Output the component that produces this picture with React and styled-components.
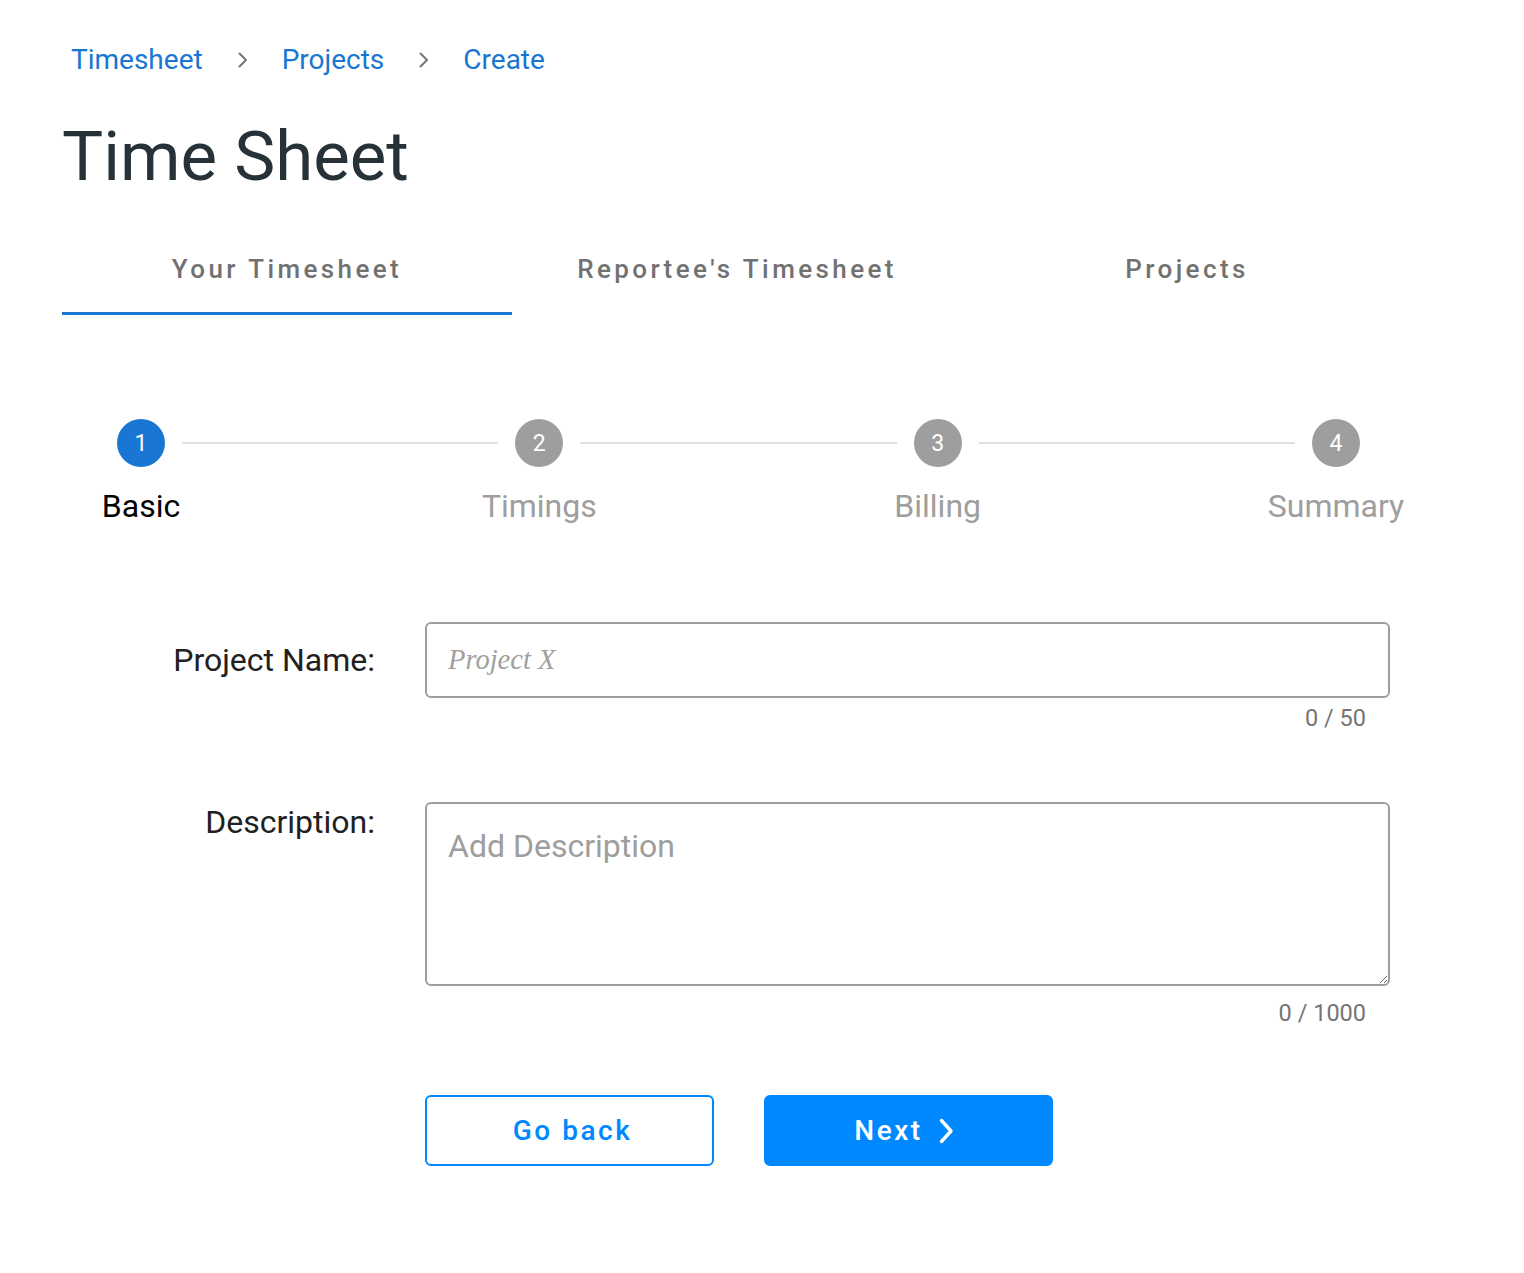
import React from 'react';
import styled, { createGlobalStyle } from 'styled-components';

const GlobalStyle = createGlobalStyle`
	body {
		margin: 0;
		background: #ffffff;
		font-family: Roboto, 'Liberation Sans', sans-serif;
	}
	* {
		box-sizing: border-box;
	}
`;

const Page = styled.div`
	width: 1350px;
	margin-left: 62px;
	padding-top: 45px;
	padding-bottom: 100px;
`;

const Crumbs = styled.nav`
	display: flex;
	align-items: center;
	padding-left: 9px;
	font-size: 28px;
	line-height: 30px;
	a {
		color: #1976d2;
		text-decoration: none;
	}
	svg {
		margin: 0 27px 0 28px;
	}
`;

const Title = styled.h1`
	margin: 40px 0 0;
	font-size: 69px;
	line-height: 84px;
	font-weight: 400;
	color: #263238;
`;

const Tabs = styled.div`
	display: flex;
	margin-top: 26px;
`;

const Tab = styled.div`
	width: 450px;
	height: 90px;
	display: flex;
	align-items: center;
	justify-content: center;
	font-size: 26px;
	font-weight: 500;
	letter-spacing: 3.4px;
	color: #717171;
	border-bottom: 3px solid ${(p) => (p.$active ? '#1976d2' : 'transparent')};
`;

const Stepper = styled.div`
	display: flex;
	align-items: flex-start;
	margin-top: 104px;
	padding: 0 44px 0 47px;
`;

const Step = styled.div`
	width: 64px;
	display: flex;
	flex-direction: column;
	align-items: center;
`;

const Circle = styled.div`
	width: 48px;
	height: 48px;
	border-radius: 50%;
	background: ${(p) => (p.$active ? '#1976d2' : '#9e9e9e')};
	color: #ffffff;
	font-size: 23px;
	display: flex;
	align-items: center;
	justify-content: center;
`;

const StepLabel = styled.div`
	margin-top: 21px;
	font-size: 32px;
	line-height: 36px;
	white-space: nowrap;
	color: ${(p) => (p.$active ? '#000000' : '#9e9e9e')};
`;

const Connector = styled.div`
	flex: 1;
	height: 2px;
	margin: 23px 9px 0 9px;
	background: #e0e0e0;
`;

const Form = styled.form`
	margin-top: 98px;
	display: grid;
	grid-template-columns: 313px 965px;
	column-gap: 50px;
`;

const Label = styled.label`
	font-size: 32px;
	line-height: 36px;
	color: #212121;
	text-align: right;
	align-self: ${(p) => (p.$top ? 'start' : 'center')};
	padding-top: ${(p) => (p.$top ? '2px' : '0')};
`;

const TextInput = styled.input`
	display: block;
	width: 100%;
	height: 76px;
	border: 2px solid #9e9e9e;
	border-radius: 6px;
	padding: 0 21px;
	font-family: 'Liberation Serif', serif;
	font-style: italic;
	font-size: 28.5px;
	color: #333;
	outline: none;
	&::placeholder {
		color: #a0a0a0;
	}
`;

const TextArea = styled.textarea`
	display: block;
	width: 100%;
	height: 184px;
	border: 2px solid #9e9e9e;
	border-radius: 6px;
	padding: 24px 21px;
	font-family: Roboto, 'Liberation Sans', sans-serif;
	font-size: 32px;
	line-height: 36px;
	color: #333;
	outline: none;
	resize: vertical;
	&::placeholder {
		color: #9e9e9e;
	}
`;

const Counter = styled.div`
	grid-column: 2;
	margin-top: ${(p) => p.$gap}px;
	padding-right: 24px;
	text-align: right;
	font-size: 23.5px;
	line-height: 26px;
	color: #757575;
`;

const Spacer = styled.div`
	grid-column: 1 / -1;
	height: ${(p) => p.$h}px;
`;

const Buttons = styled.div`
	grid-column: 2;
	display: flex;
	gap: 50px;
`;

const Button = styled.button`
	width: 289px;
	height: 71px;
	border-radius: 6px;
	border: 2px solid #0089ff;
	background: ${(p) => (p.$primary ? '#0089ff' : '#ffffff')};
	color: ${(p) => (p.$primary ? '#ffffff' : '#0089ff')};
	font-family: Roboto, 'Liberation Sans', sans-serif;
	font-size: 28px;
	font-weight: 500;
	letter-spacing: 2.5px;
	display: flex;
	align-items: center;
	justify-content: center;
	gap: 15px;
	padding-right: ${(p) => (p.$primary ? '15px' : '0')};
	cursor: pointer;
`;

const Chevron = ({ size = 24, color = '#757575', width = 2 }) => (
	<svg width={size} height={size} viewBox='0 0 24 24' fill='none'>
		<path d='M8.5 5.5l6.5 6.5-6.5 6.5' stroke={color} strokeWidth={width} strokeLinecap='round' strokeLinejoin='round' />
	</svg>
);

const steps = ['Basic', 'Timings', 'Billing', 'Summary'];

const App = () => {
	return (
		<Page>
			<GlobalStyle />
			<Crumbs>
				<a href='#'>Timesheet</a>
				<Chevron />
				<a href='#'>Projects</a>
				<Chevron />
				<a href='#'>Create</a>
			</Crumbs>
			<Title>Time Sheet</Title>
			<Tabs>
				<Tab $active>Your Timesheet</Tab>
				<Tab>Reportee's Timesheet</Tab>
				<Tab>Projects</Tab>
			</Tabs>
			<Stepper>
				{steps.map((s, i) => (
					<React.Fragment key={s}>
						{i > 0 && <Connector />}
						<Step>
							<Circle $active={i === 0}>{i + 1}</Circle>
							<StepLabel $active={i === 0}>{s}</StepLabel>
						</Step>
					</React.Fragment>
				))}
			</Stepper>
			<Form onSubmit={(e) => e.preventDefault()}>
				<Label htmlFor='pname'>Project Name:</Label>
				<TextInput id='pname' placeholder='Project X' maxLength={50} />
				<Counter $gap={7}>0 / 50</Counter>
				<Spacer $h={71} />
				<Label htmlFor='desc' $top>Description:</Label>
				<TextArea id='desc' placeholder='Add Description' maxLength={1000} />
				<Counter $gap={14}>0 / 1000</Counter>
				<Spacer $h={69} />
				<Buttons>
					<Button type='button'>Go back</Button>
					<Button type='submit' $primary>
						Next
						<svg width='16' height='28' viewBox='0 0 16 28' fill='none'>
							<path d='M3.5 3.5l9.5 10.5-9.5 10.5' stroke='#ffffff' strokeWidth='3.4' strokeLinecap='round' strokeLinejoin='round' />
						</svg>
					</Button>
				</Buttons>
			</Form>
		</Page>
	);
};

export default App;
